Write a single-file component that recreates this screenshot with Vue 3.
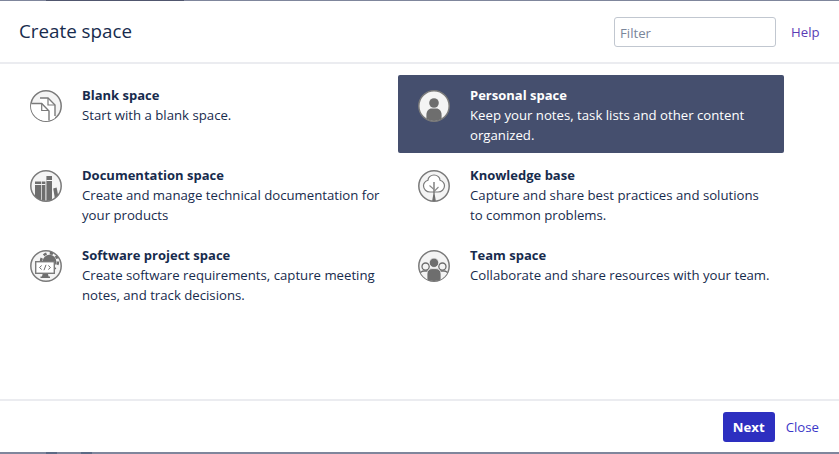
<template>
  <div class="page">
    <div class="behind behind-top"></div>
    <div class="behind behind-b1"></div>
    <div class="behind behind-b2"></div>
    <div class="dialog" role="dialog" aria-label="Create space">
      <header class="dlg-head">
        <h1 class="dlg-title">Create space</h1>
        <input class="filter" type="text" placeholder="Filter" />
        <a class="link help" href="#" @click.prevent>Help</a>
      </header>

      <main class="dlg-body">
        <div class="grid">
          <div
            v-for="item in items"
            :key="item.id"
            class="item"
            :class="{ selected: selected === item.id }"
            @click="selected = item.id"
          >
            <svg class="icon" viewBox="0 0 32 32" aria-hidden="true">
              <defs>
                <clipPath :id="'clip-' + item.id"><circle cx="16" cy="16" r="15" /></clipPath>
              </defs>
              <circle cx="16" cy="16" r="15.2" fill="#f4f4f4" stroke="#7a7a7a" stroke-width="1.5" />
              <g :clip-path="'url(#clip-' + item.id + ')'">
                <template v-if="item.id === 'blank'">
                  <path d="M10 8H18L25 15V32H10Z" fill="#fff" stroke="none" />
                  <path d="M10 8H18L25 15V26" fill="none" stroke="#7a7a7a" stroke-width="1.4" />
                  <path d="M18 8V15H25" fill="none" stroke="#7a7a7a" stroke-width="1.2" />
                  <path d="M0 13.5H11.7L19 21V33H0Z" fill="#fff" stroke="#7a7a7a" stroke-width="1.4" />
                  <path d="M11.7 13.5V20.5H19" fill="none" stroke="#7a7a7a" stroke-width="1.2" />
                </template>
                <template v-else-if="item.id === 'docs'">
                  <path d="M5 11.5H11V32H5Z M11.7 11.5H15.4V32H11.7Z M16.4 6H22V32H16.4Z" fill="#6e6e6e" />
                  <path d="M5 14.5H15.4 M16.4 10.5H22" stroke="#f4f4f4" stroke-width="1" />
                  <path d="M23.2 18.5L26.6 17.5L29.5 32H25.5Z" fill="#6e6e6e" />
                </template>
                <template v-else-if="item.id === 'software'">
                  <circle cx="19.5" cy="11.5" r="6.8" fill="#6e6e6e" />
                  <circle cx="19.5" cy="11.5" r="8.4" fill="none" stroke="#6e6e6e" stroke-width="2.6" stroke-dasharray="3.3 3.3" />
                  <rect x="5.7" y="11.7" width="18.6" height="11.6" fill="#fff" stroke="#7a7a7a" stroke-width="1.4" />
                  <path d="M12.6 24H18L18.6 26.5H20V28H10.5V26.5H12Z" fill="#6e6e6e" />
                  <path d="M11.7 15.5L9.5 17.5L11.7 19.5 M18.3 15.5L20.5 17.5L18.3 19.5 M16 14.8L14 20.2" fill="none" stroke="#6e6e6e" stroke-width="1" />
                </template>
                <template v-else-if="item.id === 'personal'">
                  <circle cx="16" cy="13" r="4.8" fill="#6e6e6e" />
                  <path d="M8.4 32V25C8.4 20.8 11 18.6 13.5 18.6H18.5C21 18.6 23.6 20.8 23.6 25V32Z" fill="#6e6e6e" />
                </template>
                <template v-else-if="item.id === 'kb'">
                  <path
                    d="M16 5C12.5 5 10 7.5 10 10.2C7.2 11.2 5.5 13.4 5.5 15.8C5.5 19.4 8.5 22 12 22H20C23.5 22 26.5 19.4 26.5 15.8C26.5 13.4 24.8 11.2 22 10.2C22 7.5 19.5 5 16 5Z"
                    fill="#fff"
                    stroke="#7a7a7a"
                    stroke-width="1.2"
                  />
                  <path d="M16 12V24L14.6 32H17.4L16 24" fill="#6e6e6e" stroke="#6e6e6e" stroke-width="1.3" />
                  <path d="M16 19.5L11.5 15.5 M16 21.5L20.5 17" fill="none" stroke="#8a8a8a" stroke-width="1.1" />
                </template>
                <template v-else>
                  <circle cx="7.6" cy="16.6" r="3.6" fill="#f4f4f4" stroke="#6e6e6e" stroke-width="1.3" />
                  <circle cx="24.4" cy="16.6" r="3.6" fill="#f4f4f4" stroke="#6e6e6e" stroke-width="1.3" />
                  <path d="M2 30V25C2 22.5 4 21 6 21H10V30Z M30 30V25C30 22.5 28 21 26 21H22V30Z" fill="#f4f4f4" stroke="#6e6e6e" stroke-width="1.3" />
                  <circle cx="16" cy="12.8" r="4.7" fill="#6e6e6e" stroke="#f4f4f4" stroke-width="0.8" />
                  <path d="M9 33V24C9 20.5 11.5 18.6 14 18.6H18C20.5 18.6 23 20.5 23 24V33Z" fill="#6e6e6e" stroke="#f4f4f4" stroke-width="0.8" />
                </template>
              </g>
            </svg>
            <div class="item-text">
              <div class="item-name">{{ item.name }}</div>
              <div class="item-desc">{{ item.desc }}</div>
            </div>
          </div>
        </div>
      </main>

      <footer class="dlg-foot">
        <button class="next" type="button">Next</button>
        <a class="link close" href="#" @click.prevent>Close</a>
      </footer>
    </div>
  </div>
</template>

<script setup>
import { ref } from "vue";

const selected = ref("personal");

const items = [
  { id: "blank", name: "Blank space", desc: "Start with a blank space." },
  {
    id: "personal",
    name: "Personal space",
    desc: "Keep your notes, task lists and other content organized.",
  },
  {
    id: "docs",
    name: "Documentation space",
    desc: "Create and manage technical documentation for your products",
  },
  {
    id: "kb",
    name: "Knowledge base",
    desc: "Capture and share best practices and solutions to common problems.",
  },
  {
    id: "software",
    name: "Software project space",
    desc: "Create software requirements, capture meeting notes, and track decisions.",
  },
  {
    id: "team",
    name: "Team space",
    desc: "Collaborate and share resources with your team.",
  },
];
</script>

<style>
html,
body {
  margin: 0;
  background: #7f869c;
}
</style>

<style scoped>
.page {
  position: relative;
  width: 839px;
  height: 454px;
  padding: 1px 0 2px;
  box-sizing: border-box;
  overflow: hidden;
  background: #7f869c;
  font-family: "Open Sans", "Noto Sans", sans-serif;
  font-size: 13.2px;
  line-height: 20px;
  color: #172b4d;
}
/* bits of the page under the overlay that show above and below the dialog */
.behind {
  position: absolute;
  background: #5c6a85;
}
.behind-top {
  top: 0;
  left: 46px;
  width: 138px;
  height: 1px;
  background: #50566e;
}
.behind-b1 {
  bottom: 0;
  left: 46px;
  width: 11px;
  height: 2px;
}
.behind-b2 {
  bottom: 0;
  left: 81px;
  width: 11px;
  height: 2px;
}
.dialog {
  position: relative;
  height: 100%;
  display: flex;
  flex-direction: column;
  background: #fff;
}
.dlg-head {
  height: 61px;
  flex: none;
  display: flex;
  align-items: center;
  padding: 0 20px 0 19px;
  border-bottom: 2px solid #ebecf0;
}
.dlg-title {
  flex: 1;
  margin: 0 0 2px;
  font-size: 18.8px;
  font-weight: 500;
  color: #172b4d;
}
.filter {
  width: 162px;
  height: 30px;
  box-sizing: border-box;
  margin-right: 15px;
  padding: 2px 5px 0;
  border: 1px solid #c1c7d0;
  border-radius: 3px;
  font: inherit;
  color: #172b4d;
}
.filter::placeholder {
  color: #7a869a;
  opacity: 1;
}
.link {
  color: #3b37c8;
  text-decoration: none;
}
.help {
  color: #5a3bb5;
  margin-right: 0;
  width: 28px;
}
.dlg-body {
  flex: 1;
  min-height: 0;
  padding: 11px 55px 0 10px;
}
.grid {
  display: grid;
  grid-template-columns: 386px 386px;
  grid-auto-rows: 78px;
  gap: 2px;
}
.item {
  display: flex;
  gap: 20px;
  padding: 10px 14px 8px 20px;
  box-sizing: border-box;
  border-radius: 2px;
  cursor: pointer;
}
.item.selected {
  background: #454f6e;
  color: #fff;
}
.icon {
  flex: none;
  width: 32px;
  height: 32px;
  margin-top: 5px;
}
.item-text {
  min-width: 0;
}
.item-name {
  font-weight: 700;
  font-size: 13px;
}
.dlg-foot {
  height: 51px;
  flex: none;
  display: flex;
  align-items: center;
  justify-content: flex-end;
  gap: 11px;
  padding: 0 20px 0 0;
  border-top: 2px solid #ebecf0;
}
.next {
  width: 52px;
  height: 30px;
  padding: 0;
  border: none;
  border-radius: 3px;
  background: #2d2fc0;
  color: #fff;
  font: inherit;
  font-weight: 700;
  cursor: pointer;
}
</style>
